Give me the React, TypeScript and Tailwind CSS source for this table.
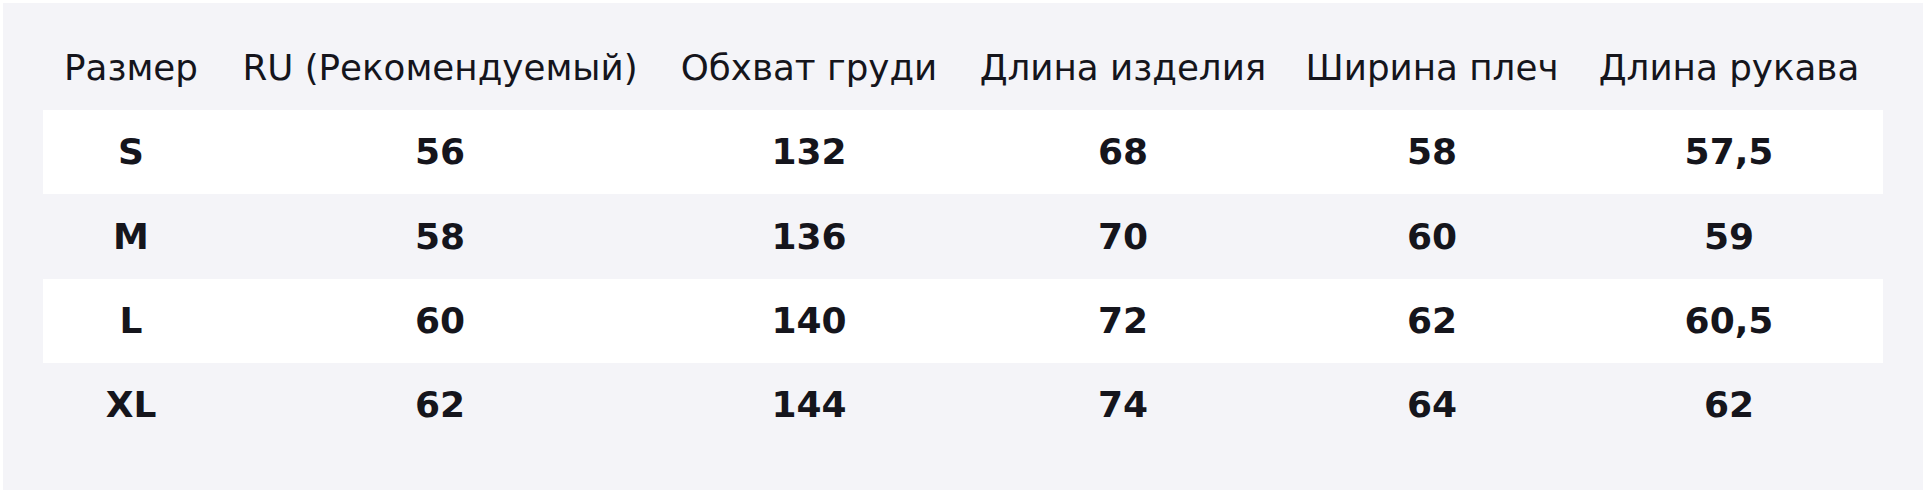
const headers = [
  "Размер",
  "RU (Рекомендуемый)",
  "Обхват груди",
  "Длина изделия",
  "Ширина плеч",
  "Длина рукава",
];

const rows = [
  ["S", "56", "132", "68", "58", "57,5"],
  ["M", "58", "136", "70", "60", "59"],
  ["L", "60", "140", "72", "62", "60,5"],
  ["XL", "62", "144", "74", "64", "62"],
];

export default function App() {
  return (
    <div className="min-h-screen bg-white p-[3px] font-['DejaVu_Sans',sans-serif] text-[#15151c]">
      <div className="bg-[#f4f4f8] px-[40px] pt-[28px] pb-[43px]">
        <table className="w-full table-fixed border-collapse">
          <colgroup>
            <col className="w-[176px]" />
            <col className="w-[442px]" />
            <col className="w-[296px]" />
            <col className="w-[332px]" />
            <col className="w-[286px]" />
            <col className="w-[308px]" />
          </colgroup>
          <thead>
            <tr>
              {headers.map((h) => (
                <th key={h} className="pt-[16px] pb-[21px] text-center text-[35.7px] leading-[42px] font-normal whitespace-nowrap">
                  {h}
                </th>
              ))}
            </tr>
          </thead>
          <tbody>
            {rows.map((r, i) => (
              <tr
                key={r[0]}
                className={i === 1 ? "h-[85px]" : i % 2 === 0 ? "h-[84px] bg-white" : "h-[84px]"}
              >
                {r.map((c, j) => (
                  <td key={j} className="p-0 text-center align-middle text-[36px] leading-[42px] font-bold">
                    {c}
                  </td>
                ))}
              </tr>
            ))}
          </tbody>
        </table>
      </div>
    </div>
  );
}
